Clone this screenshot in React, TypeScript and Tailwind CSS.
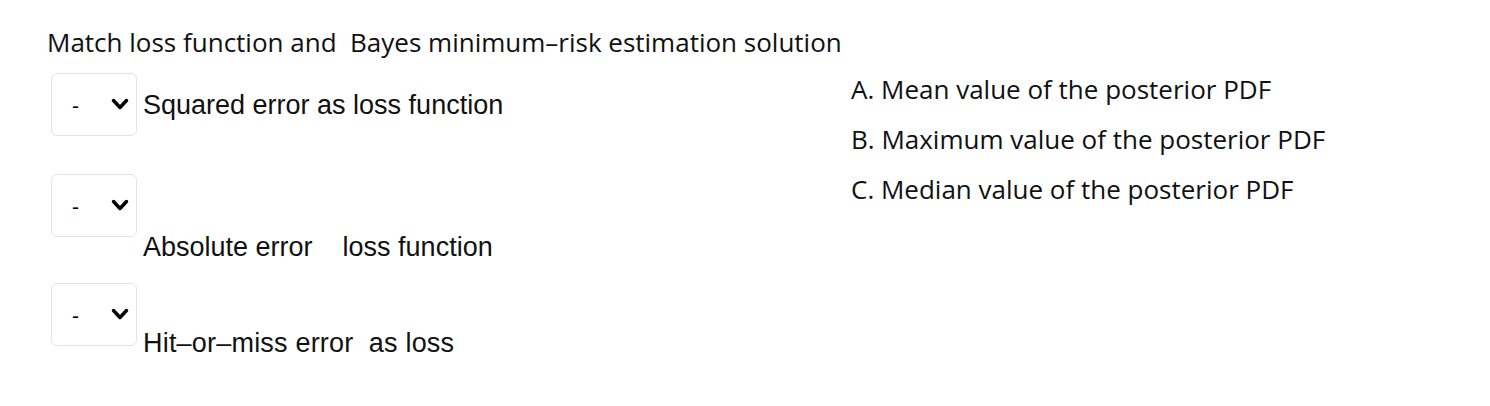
const answers = [
  "A. Mean value of the posterior PDF",
  "B. Maximum value of the posterior PDF",
  "C. Median value of the posterior PDF",
]

function Picker() {
  return (
    <div className="flex items-center w-[86px] h-[63px] shrink-0 rounded-[6px] border border-[#e3e3e3] bg-white pl-[20px] pr-[6px]">
      <span className="font-['Liberation_Sans',sans-serif] text-[21px] leading-none text-black mt-[2px]">-</span>
      <svg width="18" height="13" viewBox="0 0 18 13" className="ml-auto mr-[1px]">
        <polyline
          points="2.5,2.5 9,9.5 15.5,2.5"
          fill="none"
          stroke="#000"
          strokeWidth="3.5"
          strokeLinecap="round"
          strokeLinejoin="round"
        />
      </svg>
    </div>
  )
}

export default function App() {
  return (
    <div className="w-[1490px] h-[406px] bg-white text-[#111]">
      <div className="flex pt-[24px] pl-[47px]">
        <div className="w-[800px]">
          <p className="font-['Open_Sans',sans-serif] text-[26px] leading-[36px]">
            Match loss function and&nbsp; Bayes minimum–risk estimation solution
          </p>

          <div className="font-['Liberation_Sans',sans-serif] text-[27px]">
            <div className="mt-[13px] pl-[4px] flex items-center gap-[6px]">
              <Picker />
              <span className="leading-[27px] mt-[2px]">Squared error as loss function</span>
            </div>

            <div className="mt-[38px] pl-[4px]">
              <Picker />
              <span className="block pl-[92px] leading-[27px] mt-[-3px]">Absolute error&nbsp;&nbsp;&nbsp; loss function</span>
            </div>

            <div className="mt-[22px] pl-[4px] flex items-end gap-[6px]">
              <Picker />
              <span className="leading-[27px] mb-[-11px] tracking-[0.2px]">Hit–or–miss error&nbsp; as loss</span>
            </div>
          </div>
        </div>

        <ul className="pl-[4px] pt-[40px] font-['Open_Sans',sans-serif] text-[26px] leading-[50px] text-[#111]">
          {answers.map((a) => (
            <li key={a}>{a}</li>
          ))}
        </ul>
      </div>
    </div>
  )
}
